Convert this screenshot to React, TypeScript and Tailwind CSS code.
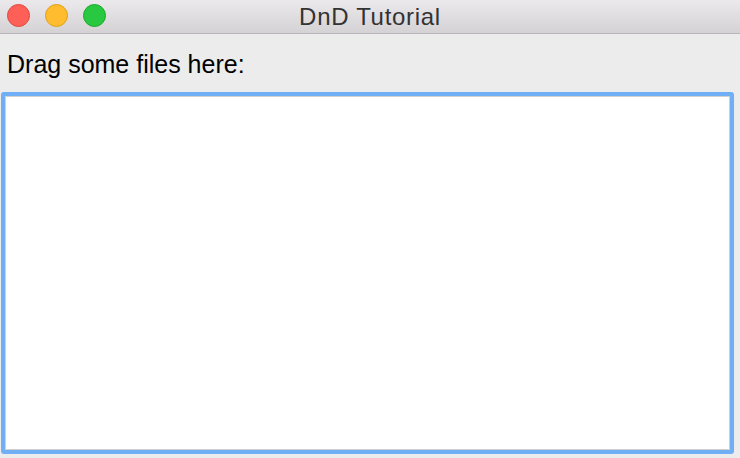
import React from "react";

export default function App() {
  return (
    <div
      className="w-[740px] h-[458px] bg-[#ececec] flex flex-col overflow-hidden"
      style={{ fontFamily: '"Liberation Sans", Arial, sans-serif' }}
    >
      <div className="relative h-[34px] shrink-0 bg-gradient-to-b from-[#ebe9eb] to-[#d4d2d4] border-b border-[#b9b7b9] flex items-center justify-center">
        <div className="absolute left-[7px] top-[4px] flex gap-[15px]">
          <div className="w-[23px] h-[23px] rounded-full bg-[#fe5f57] border border-[#e2463f]" />
          <div className="w-[23px] h-[23px] rounded-full bg-[#febc2e] border border-[#e1a116]" />
          <div className="w-[23px] h-[23px] rounded-full bg-[#28c840] border border-[#1aab29]" />
        </div>
        <span className="text-[24px] text-[#333333] tracking-[0.7px] leading-none">DnD Tutorial</span>
      </div>
      <div className="h-[58px] shrink-0 flex items-start pt-[16px] pl-[7px]">
        <span className="text-[25px] leading-[28px] text-black">Drag some files here:</span>
      </div>
      <div className="ml-[1px] w-[733px] h-[362px] rounded-[3px] bg-[#70aef6] p-[4px]">
        <div className="w-full h-full bg-white border border-[#d0d0d0]" />
      </div>
    </div>
  );
}
